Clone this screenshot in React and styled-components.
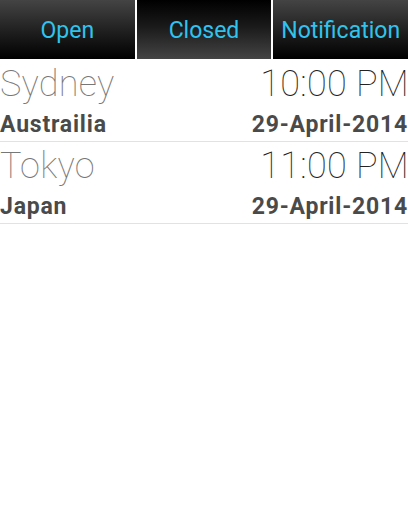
import React from 'react';
import styled, { createGlobalStyle } from 'styled-components';

const blue = "#2fc4ee";

const Global = createGlobalStyle`
    body {
        margin: 0;
        background: #fff;
        font-family: Roboto, "Liberation Sans", sans-serif;
    }
`

const Page = styled.div`
    width: 408px;
    height: 512px;
    background: #fff;
    overflow: hidden;
`

const TabBar = styled.div`
    display: grid;
    grid-template-columns: 1fr 1fr 1fr;
    column-gap: 2px;
    height: 59px;
    margin-bottom: 1px;
`

const Tab = styled.div`
    display: flex;
    align-items: center;
    justify-content: center;
    font-size: 23px;
    color: ${blue};
    background: ${p => p.active
        ? 'linear-gradient(to bottom, #000 0%, #1a1a1a 45%, #444 100%)'
        : 'linear-gradient(to bottom, #444 0%, #1e1e1e 55%, #000 100%)'};
    padding-top: 1px;
`

const Row = styled.div`
    display: grid;
    grid-template-columns: 1fr auto;
    grid-template-rows: 46px 35px;
    align-items: start;
    border-bottom: 1px solid #e2e2e2;
`

const City = styled.div`
    font-size: 36px;
    font-weight: 100;
    color: #777;
    line-height: 1;
    letter-spacing: 0.3px;
    margin-top: 6px;
`

const Time = styled(City)`
    color: #222;
    text-align: right;
    margin-right: -1px;
`

const Country = styled.div`
    font-size: 23px;
    font-weight: 700;
    color: #4a4a4a;
    line-height: 1;
    letter-spacing: 0.8px;
    margin-top: 7px;
    text-align: ${p => p.right ? 'right' : 'left'};
`

const rows = [
    { city: 'Sydney', country: 'Austrailia', time: '10:00 PM', date: '29-April-2014' },
    { city: 'Tokyo', country: 'Japan', time: '11:00 PM', date: '29-April-2014' },
];

const App = () => (
    <Page>
        <Global />
        <TabBar>
            <Tab>Open</Tab>
            <Tab active>Closed</Tab>
            <Tab>Notification</Tab>
        </TabBar>
        {rows.map(r => (
            <Row key={r.city}>
                <City>{r.city}</City>
                <Time>{r.time}</Time>
                <Country>{r.country}</Country>
                <Country right>{r.date}</Country>
            </Row>
        ))}
    </Page>
)

export default App
